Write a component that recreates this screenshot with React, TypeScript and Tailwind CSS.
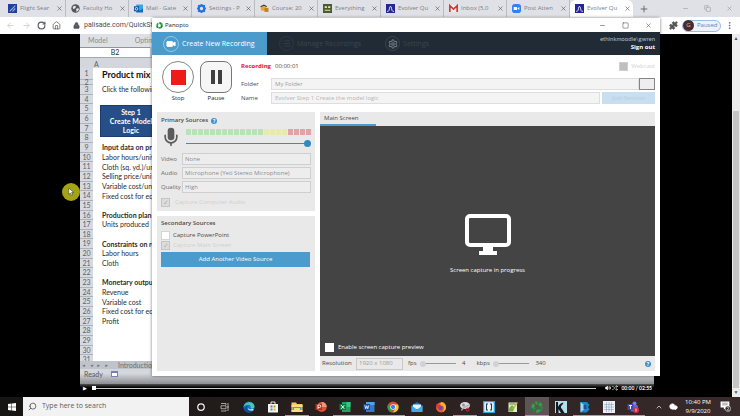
import React, { useState } from 'react';
import {
  ArrowLeft, ArrowRight, RotateCw, House, Lock, X, Plus, Minus, Square, Copy, Search,
  MoreVertical, Puzzle, Video, Settings, List, Mic, ChevronUp, Cloud, Shuffle, Volume2,
} from 'lucide-react';

const tabs = [
  { title: 'Flight Sear', icon: 'flight' },
  { title: 'Faculty Ho', icon: 'globe' },
  { title: 'Mail - Gate', icon: 'outlook' },
  { title: 'Settings - P', icon: 'gear' },
  { title: 'Course: 20', icon: 'course' },
  { title: 'Everything', icon: 'every' },
  { title: 'Evolver Qu', icon: 'evolver' },
  { title: 'Inbox (5,0', icon: 'gmail' },
  { title: 'Post Atten', icon: 'zoom' },
  { title: 'Evolver Qu', icon: 'evolver', active: true },
];

const rows = [
  { n: 3, text: 'Click the following buttons' },
  { n: 4 }, { n: 5 }, { n: 6 }, { n: 7 }, { n: 8 },
  { n: 9, text: 'Input data on products', bold: true },
  { n: 10, text: 'Labor hours/unit' },
  { n: 11, text: 'Cloth (sq. yd.)/unit' },
  { n: 12, text: 'Selling price/unit' },
  { n: 13, text: 'Variable cost/unit' },
  { n: 14, text: 'Fixed cost for equipment' },
  { n: 15 },
  { n: 16, text: 'Production plan', bold: true },
  { n: 17, text: 'Units produced' },
  { n: 18 },
  { n: 19, text: 'Constraints on resources', bold: true },
  { n: 20, text: 'Labor hours' },
  { n: 21, text: 'Cloth' },
  { n: 22 },
  { n: 23, text: 'Monetary outputs', bold: true },
  { n: 24, text: 'Revenue' },
  { n: 25, text: 'Variable cost' },
  { n: 26, text: 'Fixed cost for equipment' },
  { n: 27, text: 'Profit' },
  { n: 28 }, { n: 29 }, { n: 30 }, { n: 31 },
];

const apps = [
  { name: 'cortana' }, { name: 'taskview' }, { name: 'edge' }, { name: 'store' },
  { name: 'explorer', open: true }, { name: 'powerpoint' }, { name: 'excel', open: true },
  { name: 'word', open: true }, { name: 'chrome', open: true }, { name: 'mail' },
  { name: 'firefox' }, { name: 'snip', open: true }, { name: 'brackets' }, { name: 'notepad' },
  { name: 'panopto', open: true, active: true }, { name: 'kindle' }, { name: 'editor', open: true },
  { name: 'slack', open: true }, { name: 'teams', open: true },
];

function TabIcon({ name }: { name: string }) {
  return (
    <svg viewBox="0 0 16 16" className="w-[9px] h-[9px] shrink-0">
      {name === 'flight' && <><rect width="16" height="16" fill="#233f9a" /><path d="M3 13 13 3M8 13l5-5" stroke="#8fb0e8" strokeWidth="2" /></>}
      {name === 'globe' && <><circle cx="8" cy="8" r="7.500" fill="#54585e" /><path d="M3 5l4-2 2 2-2 3-3 1zM9 9l4-2 1 3-4 4z" fill="#e8eaed" /></>}
      {name === 'outlook' && <><rect x="4" y="1" width="12" height="13" fill="#36a3e4" /><path d="M4 8l6 4 6-4v7H4z" fill="#1b69b8" /><rect y="4" width="9" height="9" fill="#0f56a8" /><circle cx="4.500" cy="8.500" r="2.300" fill="none" stroke="#fff" strokeWidth="1.400" /></>}
      {name === 'gear' && <><circle cx="8" cy="8" r="5" fill="none" stroke="#2574e0" strokeWidth="4" /><path d="M8 0v3M8 13v3M0 8h3M13 8h3M2 2l2 2M12 12l2 2M14 2l-2 2M2 14l2-2" stroke="#2574e0" strokeWidth="2.500" /></>}
      {name === 'course' && <><path d="M1 6l6-3 4 3-2 6H2z" fill="#e7a92c" /><rect x="8" y="7" width="7" height="7" fill="#c77b23" /><path d="M1 5l6-3 5 3" stroke="#3c3c3c" strokeWidth="2" fill="none" /></>}
      {name === 'every' && <><rect width="16" height="16" fill="#4a5b2d" /><path d="M3 4h4v3H3zM9 4h4v3H9zM3 10h10v2H3z" fill="#dfe3b5" /></>}
      {name === 'evolver' && <><rect width="16" height="16" fill="#25268f" /><path d="M2 13h2c2 0 2-9 4-9s2 9 4 9h2" stroke="#fff" strokeWidth="1.500" fill="none" /></>}
      {name === 'gmail' && <><rect y="2" width="16" height="12" fill="#f5f0f0" /><path d="M1.500 14V3L8 9l6.500-6v11" stroke="#cf3c33" strokeWidth="3" fill="none" /></>}
      {name === 'zoom' && <><rect width="16" height="16" rx="5" fill="#2d83f5" /><path d="M3 5.500h6v5H3zM10 7.500l3-2v5l-3-2z" fill="#fff" /></>}
    </svg>
  );
}

function PanoptoIcon({ className }: { className: string }) {
  return (
    <svg viewBox="0 0 16 16" className={className}>
      <circle cx="8" cy="8" r="5.500" fill="none" stroke="#35a04c" strokeWidth="4" strokeDasharray="9.500 2" />
      <path d="M8 0l4 2-3 4zM1 9l1 5 5-2zM15 9l-5-1 2 5z" fill="#1e7e36" />
    </svg>
  );
}

function AppIcon({ name }: { name: string }) {
  if (name === 'panopto') return <PanoptoIcon className="w-[12px] h-[12px]" />;
  return (
    <svg viewBox="0 0 24 24" className="w-[12px] h-[12px]">
      {name === 'cortana' && <circle cx="12" cy="12" r="6.500" fill="none" stroke="#f2f2f2" strokeWidth="2.500" />}
      {name === 'taskview' && <path d="M4 5h10v3M4 9.500h10v6H4zM4 20h10v-2M18 4v16M16 12h4" stroke="#c9c5c2" strokeWidth="1.600" fill="none" />}
      {name === 'edge' && <><circle cx="12" cy="12" r="11" fill="#1474c8" /><path d="M1 12C2 2 21-3 23 11c0 5-8 5-8 2 2-6-9-8-14-1z" fill="#48c8b0" /><path d="M10 11c-4 5 1 10 11 8-6 7-18 4-18-5 1-3 5-4 7-3z" fill="#0d4c9e" /><path d="M10 12c-1 4 4 6 9 4l3 2c-8 3-14 0-12-6z" fill="#f0f6fa" /></>}
      {name === 'store' && <><path d="M8 7V2h8v5" fill="none" stroke="#e8e8e8" strokeWidth="2" /><path d="M2 6h20v17H2z" fill="#f3f3f3" /><path d="M7 9h4v4H7z" fill="#e7512a" /><path d="M13 9h4v4h-4z" fill="#7cb42e" /><path d="M7 15h4v4H7z" fill="#2c9ee5" /><path d="M13 15h4v4h-4z" fill="#f2b51b" /></>}
      {name === 'explorer' && <><path d="M1 3h9l2 3h11v15H1z" fill="#f2ce62" /><path d="M3 10h18v11H3z" fill="#3e9dd8" /><path d="M1 8h22v4H1zM1 18h5v-4h12v4h5v4H1z" fill="#f9dd82" /></>}
      {name === 'powerpoint' && <><circle cx="13.500" cy="12" r="10" fill="#d9533a" /><path d="M13.500 2a10 10 0 0110 10h-10z" fill="#f19478" /><rect x="1" y="6" width="13" height="12" fill="#b8321d" /><path d="M6 16V8h3a2 2 0 010 5H6" stroke="#fff" strokeWidth="1.700" fill="none" /></>}
      {name === 'excel' && <><rect x="6" y="2" width="17" height="20" fill="#25a065" /><path d="M15 2h8v10h-8z" fill="#38c481" /><rect x="1" y="6" width="13" height="12" fill="#107c41" /><path d="M4.500 8.500l6 7M10.500 8.500l-6 7" stroke="#fff" strokeWidth="2" /></>}
      {name === 'word' && <><rect x="6" y="2" width="17" height="20" fill="#2f7ad4" /><path d="M6 2h17v6H6z" fill="#4aa5ee" /><rect x="1" y="6" width="13" height="12" fill="#174fa5" /><path d="M3.500 8.500l2 7 2-6 2 6 2-7" stroke="#fff" strokeWidth="1.600" fill="none" /></>}
      {name === 'chrome' && <><circle cx="12" cy="12" r="11" fill="#dd4536" /><path d="M2.500 6.500l5 8L12 23A11 11 0 012.500 6.500z" fill="#2da44e" /><path d="M12 7h10a11 11 0 01-10 16l4.500-8z" fill="#f6c62e" /><circle cx="12" cy="12" r="5.500" fill="#fff" /><circle cx="12" cy="12" r="4.300" fill="#3c80ea" /></>}
      {name === 'mail' && <><path d="M1 9l11-7 11 7v13H1z" fill="#1271c4" /><path d="M4 7h16v9H4z" fill="#e9f3fb" /><path d="M1 9l11 8 11-8v13H1z" fill="#3eabe8" /></>}
      {name === 'firefox' && <><circle cx="12" cy="13" r="10" fill="#f0592a" /><path d="M12 2c7 0 11 6 10 12-1 4-4 7-7 8 5-7 3-12-2-13-3 0-3-4-1-7z" fill="#fcb52d" /><circle cx="11" cy="14" r="4.500" fill="#7443b8" /><path d="M3 5c3 2 4 3 8 4l-3 3-5 2z" fill="#e7303f" /></>}
      {name === 'snip' && <><ellipse cx="12" cy="9" rx="10" ry="7" fill="#dcdcdf" /><path d="M5 19c2-6 10-8 17-12" stroke="#a9adb5" strokeWidth="2.500" fill="none" /><circle cx="17" cy="17" r="3" fill="none" stroke="#d1333a" strokeWidth="2" /><circle cx="9" cy="8" r="3" fill="#8f959f" /></>}
      {name === 'brackets' && <><rect x="1" y="1" width="22" height="22" fill="#eef6fb" stroke="#29a5dc" strokeWidth="3" /><path d="M10 6H7v12h3M14 6h3v12h-3" stroke="#283c48" strokeWidth="2.200" fill="none" /></>}
      {name === 'notepad' && <><rect x="3" y="3" width="17" height="19" fill="#e3eec9" /><path d="M4 16c4-9 8-9 11-2l-3 7H4z" fill="#7cb236" /><path d="M21 3l-9 13" stroke="#d0a93d" strokeWidth="2.500" /><path d="M5 6h12" stroke="#6a7a55" strokeWidth="2" /></>}
      {name === 'kindle' && <><rect width="24" height="24" fill="#b4dfeb" /><path d="M2 24V2h4v10c2-5 6-8 11-9l-2 4c-4 3-4 6-1 9l5 8h-7l-5-8v8z" fill="#111b22" /></>}
      {name === 'editor' && <><path d="M3 2h13l5 6-3 4 3 5-6 6H3z" fill="#1f85ca" /><path d="M3 2l12 10L3 23z" fill="#9ed6f4" /><path d="M9 8h6v8H9z" fill="#17558a" /></>}
      {name === 'slack' && <><rect width="24" height="24" fill="#edf1f5" /><path d="M7 3v18M12 3v18M17 3v18M3 7h18M3 12h18M3 17h18" stroke="#5d84a8" strokeWidth="1.600" strokeDasharray="2 2" /></>}
      {name === 'teams' && <><circle cx="15" cy="5" r="4" fill="#7b83eb" /><rect x="7" y="8" width="15" height="13" rx="3" fill="#6469cf" /><rect x="1" y="6" width="12" height="12" fill="#4148b0" /><path d="M4 9h6M7 9v7" stroke="#fff" strokeWidth="1.800" /><circle cx="18" cy="18" r="6" fill="#d42d4b" /><path d="M18 15v6" stroke="#fff" strokeWidth="1.500" /></>}
    </svg>
  );
}

function Browser() {
  return (
    <header>
      <div className="h-[17px] bg-[#dfe1e6] flex items-center pl-[3px]">
        {tabs.map((tab, i) => (
          <div
            key={i}
            className={`w-[63px] shrink h-full flex items-center gap-[3px] pl-[5px] pr-[2px] min-w-0 ${tab.active ? 'bg-white rounded-t-md' : 'border-r border-[#b9bcc2]'}`}
          >
            <TabIcon name={tab.icon} />
            <span className="flex-1 min-w-0 whitespace-nowrap text-[6px] text-[#7c8086]">{tab.title}</span>
            <button aria-label="Close tab"><X className="w-[7px] h-[7px] text-[#4c5056]" /></button>
          </div>
        ))}
        <button aria-label="New tab" className="ml-[6px]"><Plus className="w-[10px] h-[10px] text-[#55585d]" /></button>
        <div className="ml-auto flex gap-[15px] pr-[7px] text-[#96999f]">
          <button aria-label="Minimize browser"><Minus className="w-[7px] h-[7px]" /></button>
          <button aria-label="Restore browser"><Copy className="w-[7px] h-[7px]" /></button>
          <button aria-label="Close browser"><X className="w-[7px] h-[7px]" /></button>
        </div>
      </div>
      <div className="h-[17px] bg-white flex items-center px-[6px] text-[#55585d]">
        <button aria-label="Back"><ArrowLeft className="w-[9px] h-[9px] text-[#c3c5c8]" /></button>
        <button aria-label="Forward" className="ml-[7px]"><ArrowRight className="w-[9px] h-[9px] text-[#c3c5c8]" /></button>
        <button aria-label="Reload" className="ml-[6px]"><RotateCw className="w-[9px] h-[9px]" strokeWidth={3} /></button>
        <button aria-label="Home" className="ml-[6px]"><House className="w-[9px] h-[9px]" /></button>
        <Lock className="w-[7px] h-[7px] ml-[12px] fill-current" />
        <input aria-label="Address" defaultValue="palisade.com/QuickStart" className="ml-1 flex-1 min-w-0 font-['Roboto',sans-serif] text-[7px] text-[#4b4e53] outline-none" />
        <Puzzle className="w-[9px] h-[9px] fill-current" />
        <button className="ml-[4px] h-3 w-[39px] rounded-full border border-[#9db9e8] bg-[#edf3fd] flex items-center gap-[3px] text-[6px] text-[#5480cc]">
          <span className="w-[11px] h-[11px] rounded-full bg-[#4b2a2a] text-[#e0b4ac] flex items-center justify-center">G</span>
          Paused
        </button>
        <button aria-label="Menu" className="ml-1"><MoreVertical className="w-[9px] h-[9px]" /></button>
      </div>
    </header>
  );
}

function Spreadsheet() {
  return (
    <div className="h-full flex flex-col overflow-hidden bg-[#c5c9cf] font-['Lato',sans-serif] text-[#2b2b2b]">
      <div className="h-[13px] bg-[#dde0e4] flex items-center gap-[27px] pl-2 text-[7px] text-[#8b8e93]">
        <span>Model</span>
        <span>Optimization</span>
      </div>
      <div className="h-[10px] w-[70px] bg-white border-t border-[#90949b] text-center text-[7px] leading-[9px]">B2</div>
      <div className="h-[11px] border-t border-[#a5a9b0] bg-[#d3d6dc] pl-[14px] text-[7px] leading-[12px] text-[#5c5f66]">A</div>
      <div className="h-[293px] shrink-0 overflow-hidden bg-white relative">
        <div className="h-[12px] flex items-center">
          <span className="w-[13px] h-full bg-[#d6dae0] border-b border-[#aeb3bb] text-center text-[7px] leading-[11px] text-[#5c5f66]">1</span>
          <b className="pl-[9px] text-[9px] leading-[11px] whitespace-nowrap text-[#111]">Product mix optimization</b>
        </div>
        <div className="h-[5px] w-[13px] bg-[#d6dae0] border-b border-[#aeb3bb] text-center text-[7px] leading-[4px] text-[#5c5f66]">2</div>
        <div className="h-[280px] grid auto-rows-fr">
          {rows.map((row) => (
            <div key={row.n} className="flex items-center min-h-0 text-[7px] leading-[9px] whitespace-nowrap">
              <span className="w-[13px] h-full shrink-0 bg-[#d6dae0] border-b border-[#aeb3bb] text-center text-[#5c5f66]">{row.n}</span>
              <span className={row.bold ? 'pl-[9px] font-bold' : 'pl-[9px]'}>{row.text}</span>
            </div>
          ))}
        </div>
        <button className="absolute left-[20px] top-[37px] w-[62px] h-8 bg-[#264f87] border border-[#1c3e6e] text-white text-[7px] font-bold leading-[9px]">
          Step 1<br />Create Model<br />Logic
        </button>
      </div>
      <div className="h-2 bg-[#bfc3ca] flex items-center text-[7px] leading-[8px] text-[#6b6f76]">
        <span className="w-[38px] flex justify-around text-[5px] pr-2"><i>◂</i><i>◂</i><i>▸</i><i>▸</i></span>
        Introduction
      </div>
      <div className="flex-1 bg-linear-to-b from-[#d4d7dc] from-30% to-[#8c8e91] flex items-start pl-1 pt-px text-[7px] leading-[8px] text-[#53565c]">
        Ready
        <span className="ml-2 mt-px w-[7px] h-[6px] border border-[#7a7fc0] border-t-2 bg-white" />
      </div>
      <div className="h-2 shrink-0 bg-linear-to-b from-[#555] to-black to-60% flex items-center text-white pl-[3px] pr-[2px]">
        <button aria-label="Play" className="text-[5px] leading-[8px]">▶</button>
        <input
          aria-label="Seek"
          type="range"
          defaultValue={0}
          className="ml-[5px] mr-[9px] flex-1 h-px appearance-none bg-[#cfcfcf] [&::-webkit-slider-thumb]:appearance-none [&::-webkit-slider-thumb]:w-1 [&::-webkit-slider-thumb]:h-1 [&::-webkit-slider-thumb]:bg-white"
        />
        <Volume2 className="w-[6px] h-[6px] fill-current" />
        <Shuffle className="w-[6px] h-[6px] ml-px mr-[3px]" />
        <span className="text-[5px] leading-[8px] font-bold">00:00 / 02:55</span>
      </div>
    </div>
  );
}

function Help() {
  return <span className="w-[6px] h-[6px] rounded-full bg-[#3c8fc9] text-white text-[5px] leading-[6px] font-bold text-center">?</span>;
}

function SelectRow({ label, value }: { label: string; value: string }) {
  return (
    <label className="flex items-center h-3 text-[6px] text-[#6b6b6b]">
      <span className="w-[21px] shrink-0 whitespace-nowrap">{label}</span>
      <select className="flex-1 min-w-0 h-3 appearance-none border border-[#cfcfcf] bg-[#ededed] px-[2px] leading-[9px] text-[#8e8e8e]">
        <option>{value}</option>
      </select>
    </label>
  );
}

function Meter() {
  return (
    <div className="flex gap-px h-[6px]">
      {Array.from({ length: 21 }, (_, i) => (
        <span key={i} className={`flex-1 ${i < 13 ? 'bg-[#b9e3b7]' : i < 17 ? 'bg-[#e6eaae]' : 'bg-[#e2a3a6]'}`} />
      ))}
    </div>
  );
}

const thumb = 'h-px appearance-none bg-[#9a9a9a] [&::-webkit-slider-thumb]:appearance-none [&::-webkit-slider-thumb]:w-[6px] [&::-webkit-slider-thumb]:h-[6px] [&::-webkit-slider-thumb]:rounded-full [&::-webkit-slider-thumb]:bg-[#d2d2d2]';
const box = 'appearance-none shrink-0 w-[9px] h-[9px] border';
const greyTick = 'flex items-center justify-center checked:before:content-["✓"] checked:before:text-[7px] checked:before:leading-[7px] checked:before:text-[#b0b0b0]';

function Recorder() {
  const [powerPoint, setPowerPoint] = useState(false);
  const [preview, setPreview] = useState(false);

  return (
    <section className="h-full flex flex-col bg-white text-[7px] leading-[9px] text-[#4a4a4a] shadow-[0_0_3px_#0008]">
      <div className="h-[14px] flex items-center pl-1 pr-2 text-[6px] text-[#222]">
        <PanoptoIcon className="w-[7px] h-[7px] mr-[2px]" />
        Panopto
        <div className="ml-auto flex gap-4 text-[#555]">
          <button aria-label="Minimize"><Minus className="w-[7px] h-[7px]" /></button>
          <button aria-label="Maximize"><Square className="w-[7px] h-[7px]" /></button>
          <button aria-label="Close"><X className="w-[7px] h-[7px]" /></button>
        </div>
      </div>

      <nav className="h-[23px] shrink-0 bg-[#212b35] flex text-[#3a454f]">
        <button className="w-[115px] bg-[#4b9ccd] text-white flex items-center gap-[3px] pl-[11px] whitespace-nowrap">
          <span className="w-4 h-4 rounded-full border border-[#94c8e6] flex items-center justify-center">
            <Video className="w-[10px] h-[10px] fill-current" />
          </span>
          Create New Recording
        </button>
        <button className="flex items-center gap-[3px] pl-[12px] whitespace-nowrap">
          <span className="w-[15px] h-[15px] rounded-full border border-[#2e3943] flex items-center justify-center"><List className="w-[9px] h-[9px]" /></span>
          Manage Recordings
        </button>
        <button className="flex items-center gap-[3px] pl-6">
          <span className="w-[15px] h-[15px] rounded-full border border-[#39444d] flex items-center justify-center"><Settings className="w-[10px] h-[10px] text-[#65717b]" strokeWidth={3} /></span>
          Settings
        </button>
        <div className="ml-auto pr-[5px] pt-[2px] text-right text-[6px] text-[#b6bcc1]">
          <div className="font-['Lato',sans-serif]">ethinkmoodle\gwren</div>
          <a href="#signout" className="block text-white font-bold">Sign out</a>
        </div>
      </nav>

      <div className="h-[57px] shrink-0 flex pl-[10px] pr-[5px] pt-[6px]">
        <button className="w-8 flex flex-col items-center gap-px text-[6px] text-[#222]">
          <span className="w-8 h-8 rounded-full border border-[#858585] flex items-center justify-center"><span className="w-[15px] h-[15px] bg-[#ee1c16]" /></span>
          Stop
        </button>
        <button className="ml-[6px] w-8 flex flex-col items-center gap-px text-[6px] text-[#222]">
          <span className="w-8 h-8 rounded-lg border border-[#777] bg-[#f6f6f7] flex items-center justify-center gap-[3px]">
            <span className="w-1 h-[14px] bg-[#3f3f3f]" /><span className="w-1 h-[14px] bg-[#3f3f3f]" />
          </span>
          Pause
        </button>
        <div className="ml-[9px] flex-1 min-w-0 flex flex-col gap-[2px] text-[6px]">
          <div className="flex items-center h-[10px] mb-[5px]">
            <b className="text-[#e0143c] w-[34px]">Recording</b>
            <span>00:00:01</span>
            <label className="ml-auto flex items-center gap-[3px] text-[#d8d0d0]">
              <input type="checkbox" disabled className={`${box} bg-[#bfbfbf] border-[#cfcfcf]`} />
              Webcast
            </label>
          </div>
          <label className="flex h-3 items-center">
            <span className="w-[30px]">Folder</span>
            <input disabled defaultValue="My Folder" className="flex-1 min-w-0 h-3 border border-[#dedede] bg-[#f4f4f4] px-[3px] text-[#9e9e9e]" />
            <button aria-label="Browse folders" className="w-4 h-3 border border-[#858585] bg-[#eee]" />
          </label>
          <label className="flex h-3 items-center">
            <span className="w-[30px]">Name</span>
            <input disabled defaultValue="Evolver Step 1 Create the model logic" className="flex-1 min-w-0 h-3 border border-[#dedede] bg-[#f4f4f4] px-[3px] text-[#b4b4b4]" />
            <button className="ml-[2px] w-[53px] h-3 bg-[#c8dfef] text-[#b2cfe2]">Join Session</button>
          </label>
        </div>
      </div>

      <div className="flex-1 min-h-0 flex gap-[5px] px-[5px] pb-[5px]">
        <div className="w-[158px] shrink-0 flex flex-col gap-[5px]">
          <div className="bg-[#e9e9e9] h-[99px] px-1 pt-1">
            <h2 className="flex items-center gap-[3px] text-[6px] leading-[9px] font-semibold">Primary Sources <Help /></h2>
            <div className="flex items-center gap-[6px] mt-px h-[21px]">
              <Mic className="w-5 h-5 text-[#5c5c5c] shrink-0 [&_rect]:fill-current -mr-px" />
              <div className="flex-1 flex flex-col gap-[8px]">
                <Meter />
                <input
                  aria-label="Microphone volume"
                  type="range"
                  defaultValue={100}
                  className="block w-full h-px appearance-none bg-[#3a8cc0] [&::-webkit-slider-thumb]:appearance-none [&::-webkit-slider-thumb]:w-[7px] [&::-webkit-slider-thumb]:h-[7px] [&::-webkit-slider-thumb]:rounded-full [&::-webkit-slider-thumb]:bg-[#2f8ac4]"
                />
              </div>
            </div>
            <div className="mt-[6px] flex flex-col gap-[2px]">
              <SelectRow label="Video" value="None" />
              <SelectRow label="Audio" value="Microphone (Yeti Stereo Microphone)" />
              <SelectRow label="Quality" value="High" />
            </div>
            <label className="mt-[5px] flex items-center gap-[5px] text-[6px] text-[#d0d0d0]">
              <input type="checkbox" disabled defaultChecked className={`${box} ${greyTick} border-[#c4c4c4] bg-[#dcdcdc]`} />
              Capture Computer Audio
            </label>
          </div>
          <div className="bg-[#e9e9e9] flex-1 px-1 pt-[3px] text-[6px]">
            <h2 className="font-semibold mb-[2px]">Secondary Sources</h2>
            <label className="flex items-center gap-[3px] h-[10px]">
              <input type="checkbox" checked={powerPoint} onChange={(e) => setPowerPoint(e.target.checked)} className={`${box} bg-white border-[#d4d4d4] checked:bg-[#3c8fc9]`} />
              Capture PowerPoint
            </label>
            <label className="flex items-center gap-[3px] h-[10px] text-[#d0d0d0]">
              <input type="checkbox" disabled defaultChecked className={`${box} ${greyTick} border-[#c4c4c4] bg-[#dcdcdc]`} />
              Capture Main Screen
            </label>
            <button className="mt-[2px] w-[149px] h-[15px] bg-[#4b9ccd] text-white">Add Another Video Source</button>
          </div>
        </div>

        <div className="flex-1 min-w-0 flex flex-col bg-[#e9e9e9]">
          <button className="w-14 h-[14px] border-b-2 border-[#4b9ccd] text-[6px] text-left pl-1 pt-px whitespace-nowrap">Main Screen</button>
          <div className="flex-1 relative bg-[#444] text-white text-[6px] flex flex-col items-center justify-center gap-[10px] pt-[6px]">
            <svg viewBox="0 0 46 42" className="w-[46px] h-[42px]">
              <rect x="2" y="2" width="42" height="29" rx="3" fill="none" stroke="#fff" strokeWidth="4" />
              <path d="M18 31h10v6h4v4H14v-4h4z" fill="#fff" />
            </svg>
            <span>Screen capture in progress</span>
            <label className="absolute left-[5px] bottom-1 flex items-center gap-1">
              <input type="checkbox" checked={preview} onChange={(e) => setPreview(e.target.checked)} className={`${box} bg-white border-white checked:bg-[#3c8fc9]`} />
              Enable screen capture preview
            </label>
          </div>
          <div className="h-[15px] flex items-center pl-[2px] pr-1 text-[6px]">
            <label className="flex items-center">
              <span className="w-[34px]">Resolution</span>
              <select className="w-[47px] h-3 appearance-none border border-[#c9c9c9] px-[2px] text-[#999]"><option>1920 x 1080</option></select>
            </label>
            <label className="ml-[5px] flex items-center">
              <span className="w-3">fps</span>
              <input type="range" defaultValue={0} className={`${thumb} w-[36px]`} />
            </label>
            <span className="ml-[6px]">4</span>
            <label className="ml-[11px] flex items-center">
              <span className="w-[17px]">kbps</span>
              <input type="range" defaultValue={0} className={`${thumb} w-[36px]`} />
            </label>
            <span className="ml-[6px] mr-auto">340</span>
            <Help />
          </div>
        </div>
      </div>
    </section>
  );
}

function Taskbar() {
  return (
    <footer className="h-[19px] bg-linear-to-r from-[#171514] via-[#29211f] to-[#392a2b] flex items-center text-white">
      <button aria-label="Start" className="w-[23px] flex justify-center">
        <svg viewBox="0 0 16 16" className="w-2 h-2"><path d="M0 2l7-1v6.500H0zM8 1l8-1v7.500H8zM0 8.500h7V15l-7-1zM8 8.500h8V16l-8-1z" fill="#fff" /></svg>
      </button>
      <label className="w-[166px] h-full bg-[#f2f2f2] flex items-center gap-[5px] pl-[5px]">
        <Search className="w-[9px] h-[9px] text-[#444] -scale-x-100" />
        <input aria-label="Search" placeholder="Type here to search" className="flex-1 min-w-0 text-[7px] outline-none placeholder:text-[#5c5c5c]" />
      </label>
      {apps.map((app) => (
        <button
          key={app.name}
          aria-label={app.name}
          className={`w-6 h-full flex items-center justify-center ${app.active ? 'bg-[#5c5554]' : ''} ${app.open ? 'shadow-[inset_0_-1px_0_#d884b4]' : ''}`}
        >
          <AppIcon name={app.name} />
        </button>
      ))}
      <div className="ml-auto flex items-center">
        <ChevronUp className="w-2 h-2" />
        <Cloud className="w-[9px] h-[9px] ml-[6px] fill-current" />
        <div className="w-9 ml-[2px] text-center text-[6px] leading-[9px]">10:40 PM<br />9/9/2020</div>
        <button aria-label="Notifications" className="ml-1 mr-[9px]">
          <svg viewBox="0 0 20 20" className="w-[11px] h-[11px]"><path d="M1 1h16v11h-6l-4 4v-4H1z" fill="#fff" /><path d="M4 4h10M4 7h10" stroke="#534645" /><circle cx="14.500" cy="14" r="5" fill="#3a2c2d" stroke="#fff" /><path d="M13 12.500c1-2 4-1 3 1l-3 3h4" stroke="#fff" fill="none" /></svg>
        </button>
      </div>
    </footer>
  );
}

export default function App() {
  return (
    <div className="min-h-screen flex flex-col relative bg-black font-['Open_Sans','Noto_Sans',sans-serif]">
      <Browser />
      <main className="flex-1 flex min-h-[363px]">
        <div className="flex-1 min-w-0 pl-[80px] pr-[78px] pb-[5px]">
          <Spreadsheet />
        </div>
        <div className="w-2 bg-[#ededed] flex flex-col items-center text-[5px] leading-[9px] text-[#555]">
          <span>▲</span>
          <span className="w-[6px] flex-1 mt-[68px] bg-[#c6c6c6]" />
          <span>▼</span>
        </div>
      </main>
      <Taskbar />
      <div className="absolute left-[152px] right-[80px] top-[18px] bottom-[40px]">
        <Recorder />
      </div>
      <div className="absolute left-[62px] top-[183px] w-[18px] h-[18px] rounded-full bg-[#a3a315] flex items-center justify-center">
        <svg viewBox="0 0 10 14" className="w-[6px] h-[8px]"><path d="M1 0v11l3-2 2 4 2-1-2-4h4z" fill="#fff" stroke="#333" /></svg>
      </div>
    </div>
  );
}
